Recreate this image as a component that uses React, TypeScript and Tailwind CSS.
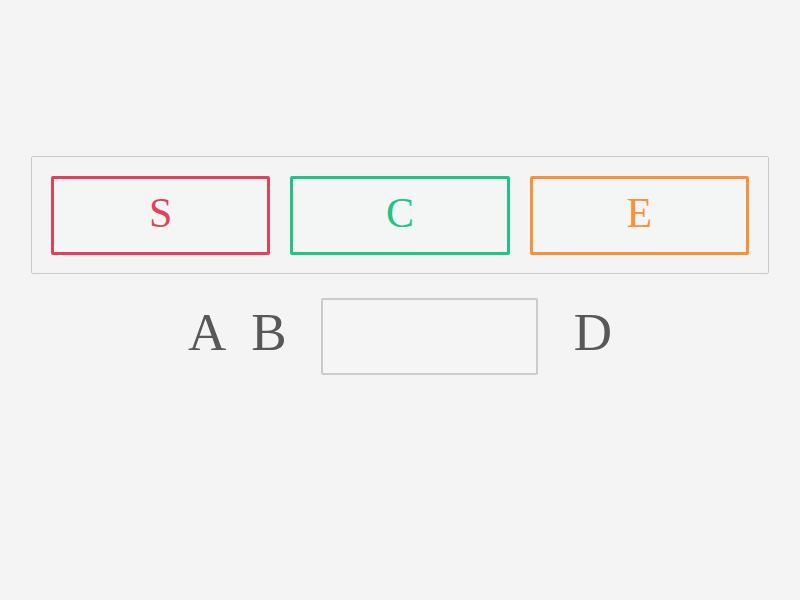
export default function App() {
  const cards = [
    { label: "S", cls: "border-[#e3405c] text-[#e3405c]" },
    { label: "C", cls: "border-[#1fc585] text-[#1fc585]" },
    { label: "E", cls: "border-[#f7923a] text-[#f7923a]" },
  ]

  return (
    <div
      className="w-[800px] h-[600px] bg-[#f5f4f5] pt-[156px] px-[31px]"
      style={{ fontFamily: '"Liberation Serif", serif' }}
    >
      <div className="h-[118px] border border-[#c9c8ca] rounded-[2px] bg-[#f5f4f5] p-[19px] flex gap-[20px]">
        {cards.map((c) => (
          <div
            key={c.label}
            className={`flex-1 h-[79px] border-[3px] rounded-[2px] bg-[#f4f5f5] flex items-center justify-center pb-[6px] text-[42px] leading-none ${c.cls}`}
          >
            {c.label}
          </div>
        ))}
      </div>

      <div className="mt-[24px] flex items-center justify-center text-[53px] leading-none text-[#58575a]">
        <span className="mr-[25px] pb-[8px]">A</span>
        <span className="mr-[34px] pb-[8px]">B</span>
        <div className="w-[217px] h-[77px] border-2 border-[#cbcacc] rounded-[2px] bg-[#f6f5f6]" />
        <span className="ml-[36px] pb-[8px]">D</span>
      </div>
    </div>
  )
}
